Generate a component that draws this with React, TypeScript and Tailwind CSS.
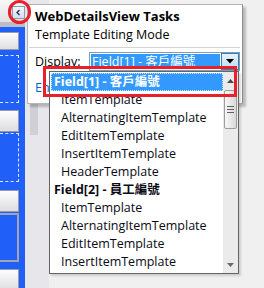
import React from 'react';

type Row = { text: string; header?: boolean; selected?: boolean };

const rows: Row[] = [
  { text: 'Field[1] - 客戶編號', header: true, selected: true },
  { text: 'ItemTemplate' },
  { text: 'AlternatingItemTemplate' },
  { text: 'EditItemTemplate' },
  { text: 'InsertItemTemplate' },
  { text: 'HeaderTemplate' },
  { text: 'Field[2] - 員工編號', header: true },
  { text: 'ItemTemplate' },
  { text: 'AlternatingItemTemplate' },
  { text: 'EditItemTemplate' },
  { text: 'InsertItemTemplate' },
];

function StripButton({ h }: { h: string }) {
  return <div className={`${h} w-[19px] shrink-0 border border-l-0 border-[#9a9aa4] bg-gradient-to-b from-[#fdfdfd] to-[#dedee2]`} />;
}

function DesignerStrip() {
  return (
    <div className="w-[25px] shrink-0 flex flex-col">
      <div className="h-[22px] flex justify-end pt-[6px] bg-gradient-to-b from-[#f8f8f8] to-[#e2e2e4]">
        <div className="w-[13px] h-[13px] border border-[#8c9ab4] bg-gradient-to-b from-[#f4f7fc] to-[#d6deec] flex items-center justify-center">
          <svg width="7" height="7" viewBox="0 0 7 7">
            <path d="M4.5 1 L2 3.5 L4.5 6" fill="none" stroke="#1c2a5a" strokeWidth="1.3" />
          </svg>
        </div>
      </div>
      <div className="h-[5px] bg-[#bcbcc4]" />
      <div className="flex-1 bg-[#2060f8] flex flex-col pt-[5px] overflow-hidden">
        <StripButton h="h-[18px]" />
        <div className="mt-[5px] h-[48px] w-[19px] shrink-0 border border-l-0 border-dashed border-[#dfe8ff]" />
        <div className="mt-[7px]"><StripButton h="h-[22px]" /></div>
        <div className="mt-px h-[49px] w-[19px] shrink-0 border border-l-0 border-dashed border-[#dfe8ff]" />
        <div className="mt-[8px]"><StripButton h="h-[22px]" /></div>
        <div className="mt-px h-[49px] w-[19px] shrink-0 border-2 border-l-0 border-[#a4a4b0]" />
        <div className="mt-[7px]"><StripButton h="h-[22px]" /></div>
      </div>
    </div>
  );
}

function TasksPanel() {
  return (
    <div className="absolute left-[27px] top-[4px] w-[216px] h-[100px] bg-white border border-[#b4b4b4] border-r-[#8c8c8c] shadow-[3px_3px_2px_rgba(0,0,0,0.22)] pl-[7px] pr-[2px] pt-[2px] text-[12.5px] text-black">
      <div className="h-[18px] leading-[18px] font-bold text-[13px]">WebDetailsView Tasks</div>
      <div className="mt-px h-[18px] leading-[18px]">Template Editing Mode</div>
      <div className="mt-[3px] -ml-[6px] h-px bg-[#d4d4d4]" />
      <div className="mt-[4px] h-[19px] flex items-center">
        <span className="w-[54px] shrink-0 leading-[18px]">Display:</span>
        <div className="w-[151px] h-[19px] border border-[#7f9db9] flex bg-white">
          <div className="flex-1 m-px bg-[#3399ff] text-white leading-[15px] pl-[1px] whitespace-nowrap overflow-hidden">Field[1] - 客戶編號</div>
          <div className="w-[18px] h-[17px] border border-[#3c7fb1] bg-gradient-to-b from-[#e6f4fc] to-[#bcdcf4] flex items-center justify-center">
            <svg width="8" height="5" viewBox="0 0 8 5"><path d="M0 0 H8 L4 4.5 Z" fill="#000" /></svg>
          </div>
        </div>
      </div>
      {/* mostly hidden behind the open dropdown list */}
      <div className="mt-[8px] h-[18px] leading-[18px] text-[#0066cc] whitespace-nowrap">End Template Editing</div>
    </div>
  );
}

function ScrollBar() {
  return (
    <div className="w-[15px] shrink-0 bg-[#ebebeb] flex flex-col">
      <div className="h-[17px] flex items-center justify-center">
        <svg width="7" height="4" viewBox="0 0 7 4"><path d="M0 4 H7 L3.5 0 Z" fill="#4a4a4a" /></svg>
      </div>
      <div className="mt-px h-[39px] mx-px rounded-[2px] border border-[#9c9c9c] bg-gradient-to-r from-[#f8f8f8] to-[#d8d8d8] flex flex-col items-center justify-center gap-[2px]">
        <div className="w-[7px] h-px bg-[#606060]" />
        <div className="w-[7px] h-px bg-[#606060]" />
        <div className="w-[7px] h-px bg-[#606060]" />
      </div>
      <div className="flex-1" />
      <div className="h-[17px] flex items-center justify-center">
        <svg width="7" height="4" viewBox="0 0 7 4"><path d="M0 0 H7 L3.5 4 Z" fill="#6a6a6a" /></svg>
      </div>
    </div>
  );
}

function TemplateList() {
  return (
    <div className="absolute left-[49px] top-[71px] w-[190px] h-[203px] bg-white border border-[#646464] shadow-[2px_2px_2px_rgba(0,0,0,0.15)] flex text-[12.5px]">
      <div className="flex-1 pt-px pl-px overflow-hidden">
        {rows.map((r, i) => (
          <div
            key={i}
            className={`h-[18px] leading-[16px] whitespace-nowrap overflow-hidden ${r.header ? 'font-bold pl-[2px]' : 'pl-[9px]'} ${r.selected ? 'bg-[#3399ff] text-white border border-dotted border-[#cfe6ff]' : 'text-[#0a0a14] border border-transparent'}`}
          >
            {r.text}
          </div>
        ))}
      </div>
      <ScrollBar />
    </div>
  );
}

export default function App() {
  return (
    <div className="relative w-[264px] h-[288px] overflow-hidden flex font-['Open_Sans','Noto_Sans_CJK_TC',sans-serif] bg-[#f0f0f0]">
      <DesignerStrip />
      <div className="w-[24px] shrink-0 bg-[#e7e7eb] pt-[103px]">
        <div className="ml-[5px] w-[8px] h-[32px] bg-[#cfcfd6]" />
      </div>
      <div className="flex-1 bg-[#f0f0f0]" />

      <TasksPanel />
      <TemplateList />

      <div className="absolute left-[43px] top-[66px] w-[194px] h-[31px] border-[3px] border-[#e8202a]" />
      <div className="absolute left-[8px] top-0 w-[23px] h-[24px] rounded-full border-[3px] border-[#e8202a]" />
    </div>
  );
}
